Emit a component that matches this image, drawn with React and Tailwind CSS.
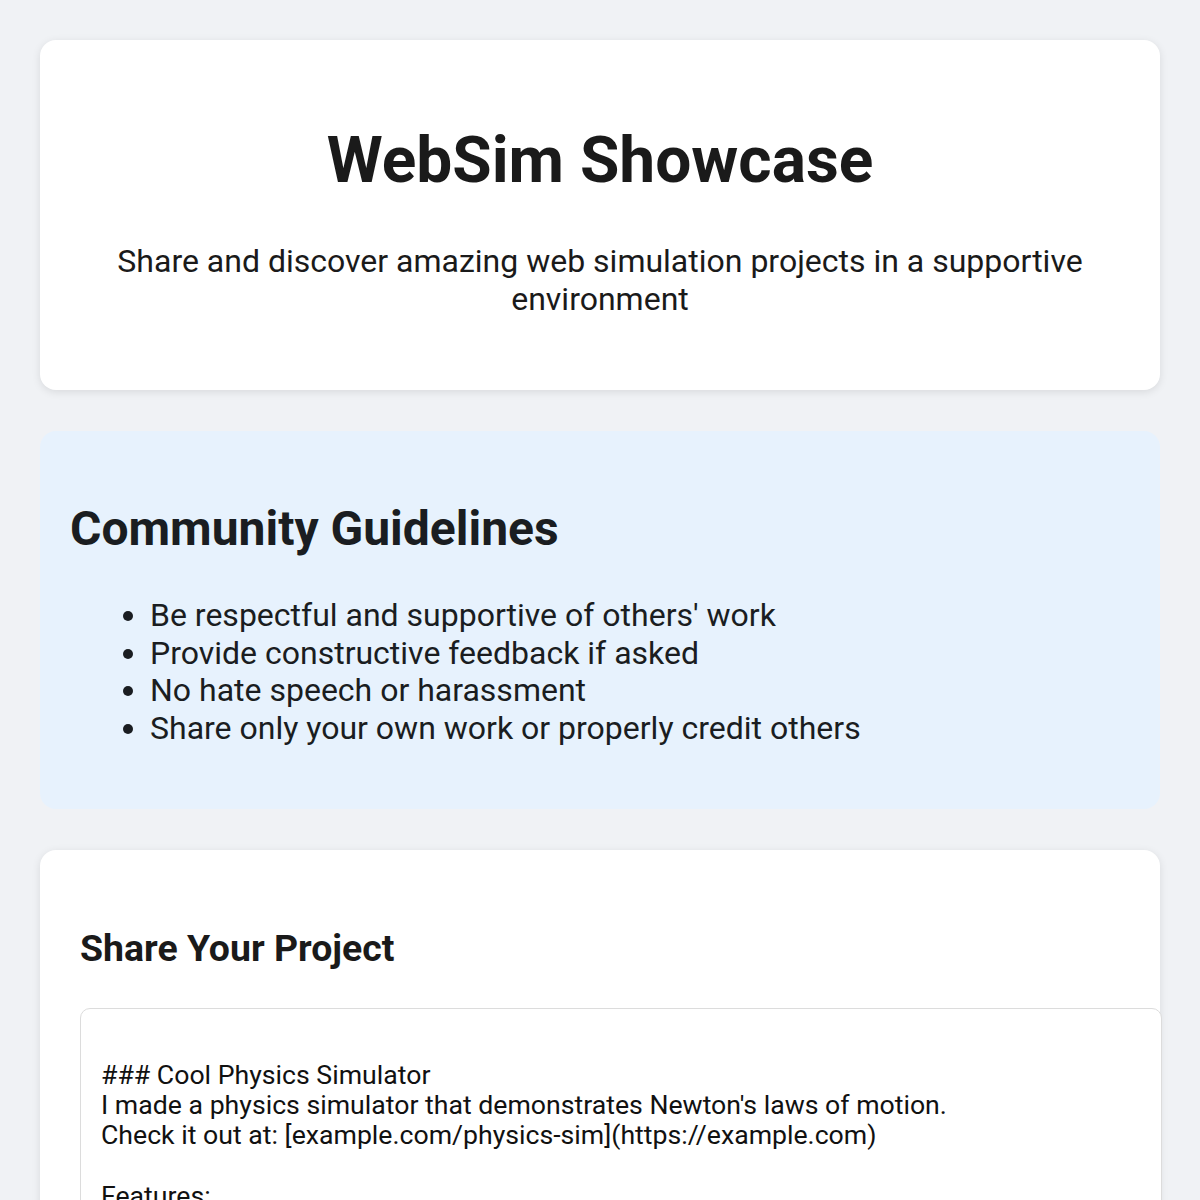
import React from "react";

const projectDraft = `
### Cool Physics Simulator
I made a physics simulator that demonstrates Newton's laws of motion.
Check it out at: [example.com/physics-sim](https://example.com)

Features:
- Realistic gravity and collisions
- Adjustable mass and friction
- Real-time force vectors`;

const guidelines = [
  "Be respectful and supportive of others' work",
  "Provide constructive feedback if asked",
  "No hate speech or harassment",
  "Share only your own work or properly credit others",
];

export default function App() {
  return (
    <div className="min-h-screen bg-[#f0f2f5] p-[40px] font-['Roboto','Noto_Sans',sans-serif] text-[32px] leading-[1.172]">
      <header className="mb-[41px] rounded-[16px] bg-white p-[40px] text-center shadow-[0_2px_8px_rgba(0,0,0,0.1)]">
        <h1 className="mt-[43px] mb-[45px] text-[64px] font-bold leading-[1.172] text-[#1a1a1a]">
          WebSim Showcase
        </h1>
        <p className="my-[32px] text-[#1a1a1a]">
          Share and discover amazing web simulation projects in a supportive environment
        </p>
      </header>

      <section className="mb-[41px] rounded-[16px] bg-[#e7f2fd] p-[30px] text-[#1a1d21]">
        <h2 className="my-[40px] text-[48px] font-bold leading-[1.172]">Community Guidelines</h2>
        <ul className="my-[32px] list-disc pl-[80px]">
          {guidelines.map((g) => (
            <li key={g}>{g}</li>
          ))}
        </ul>
      </section>

      <section className="rounded-[16px] bg-white p-[40px] shadow-[0_2px_8px_rgba(0,0,0,0.1)]">
        <h3 className="my-[37px] text-[37.44px] font-bold leading-[1.172] text-[#1a1a1a]">
          Share Your Project
        </h3>
        <textarea
          className="box-content block h-[420px] w-full resize-y rounded-[10px] border border-[#dcdcdc] bg-white p-[20px] text-[26.67px] leading-[1.14] text-[#111] outline-none"
          defaultValue={projectDraft}
        />
      </section>
    </div>
  );
}
